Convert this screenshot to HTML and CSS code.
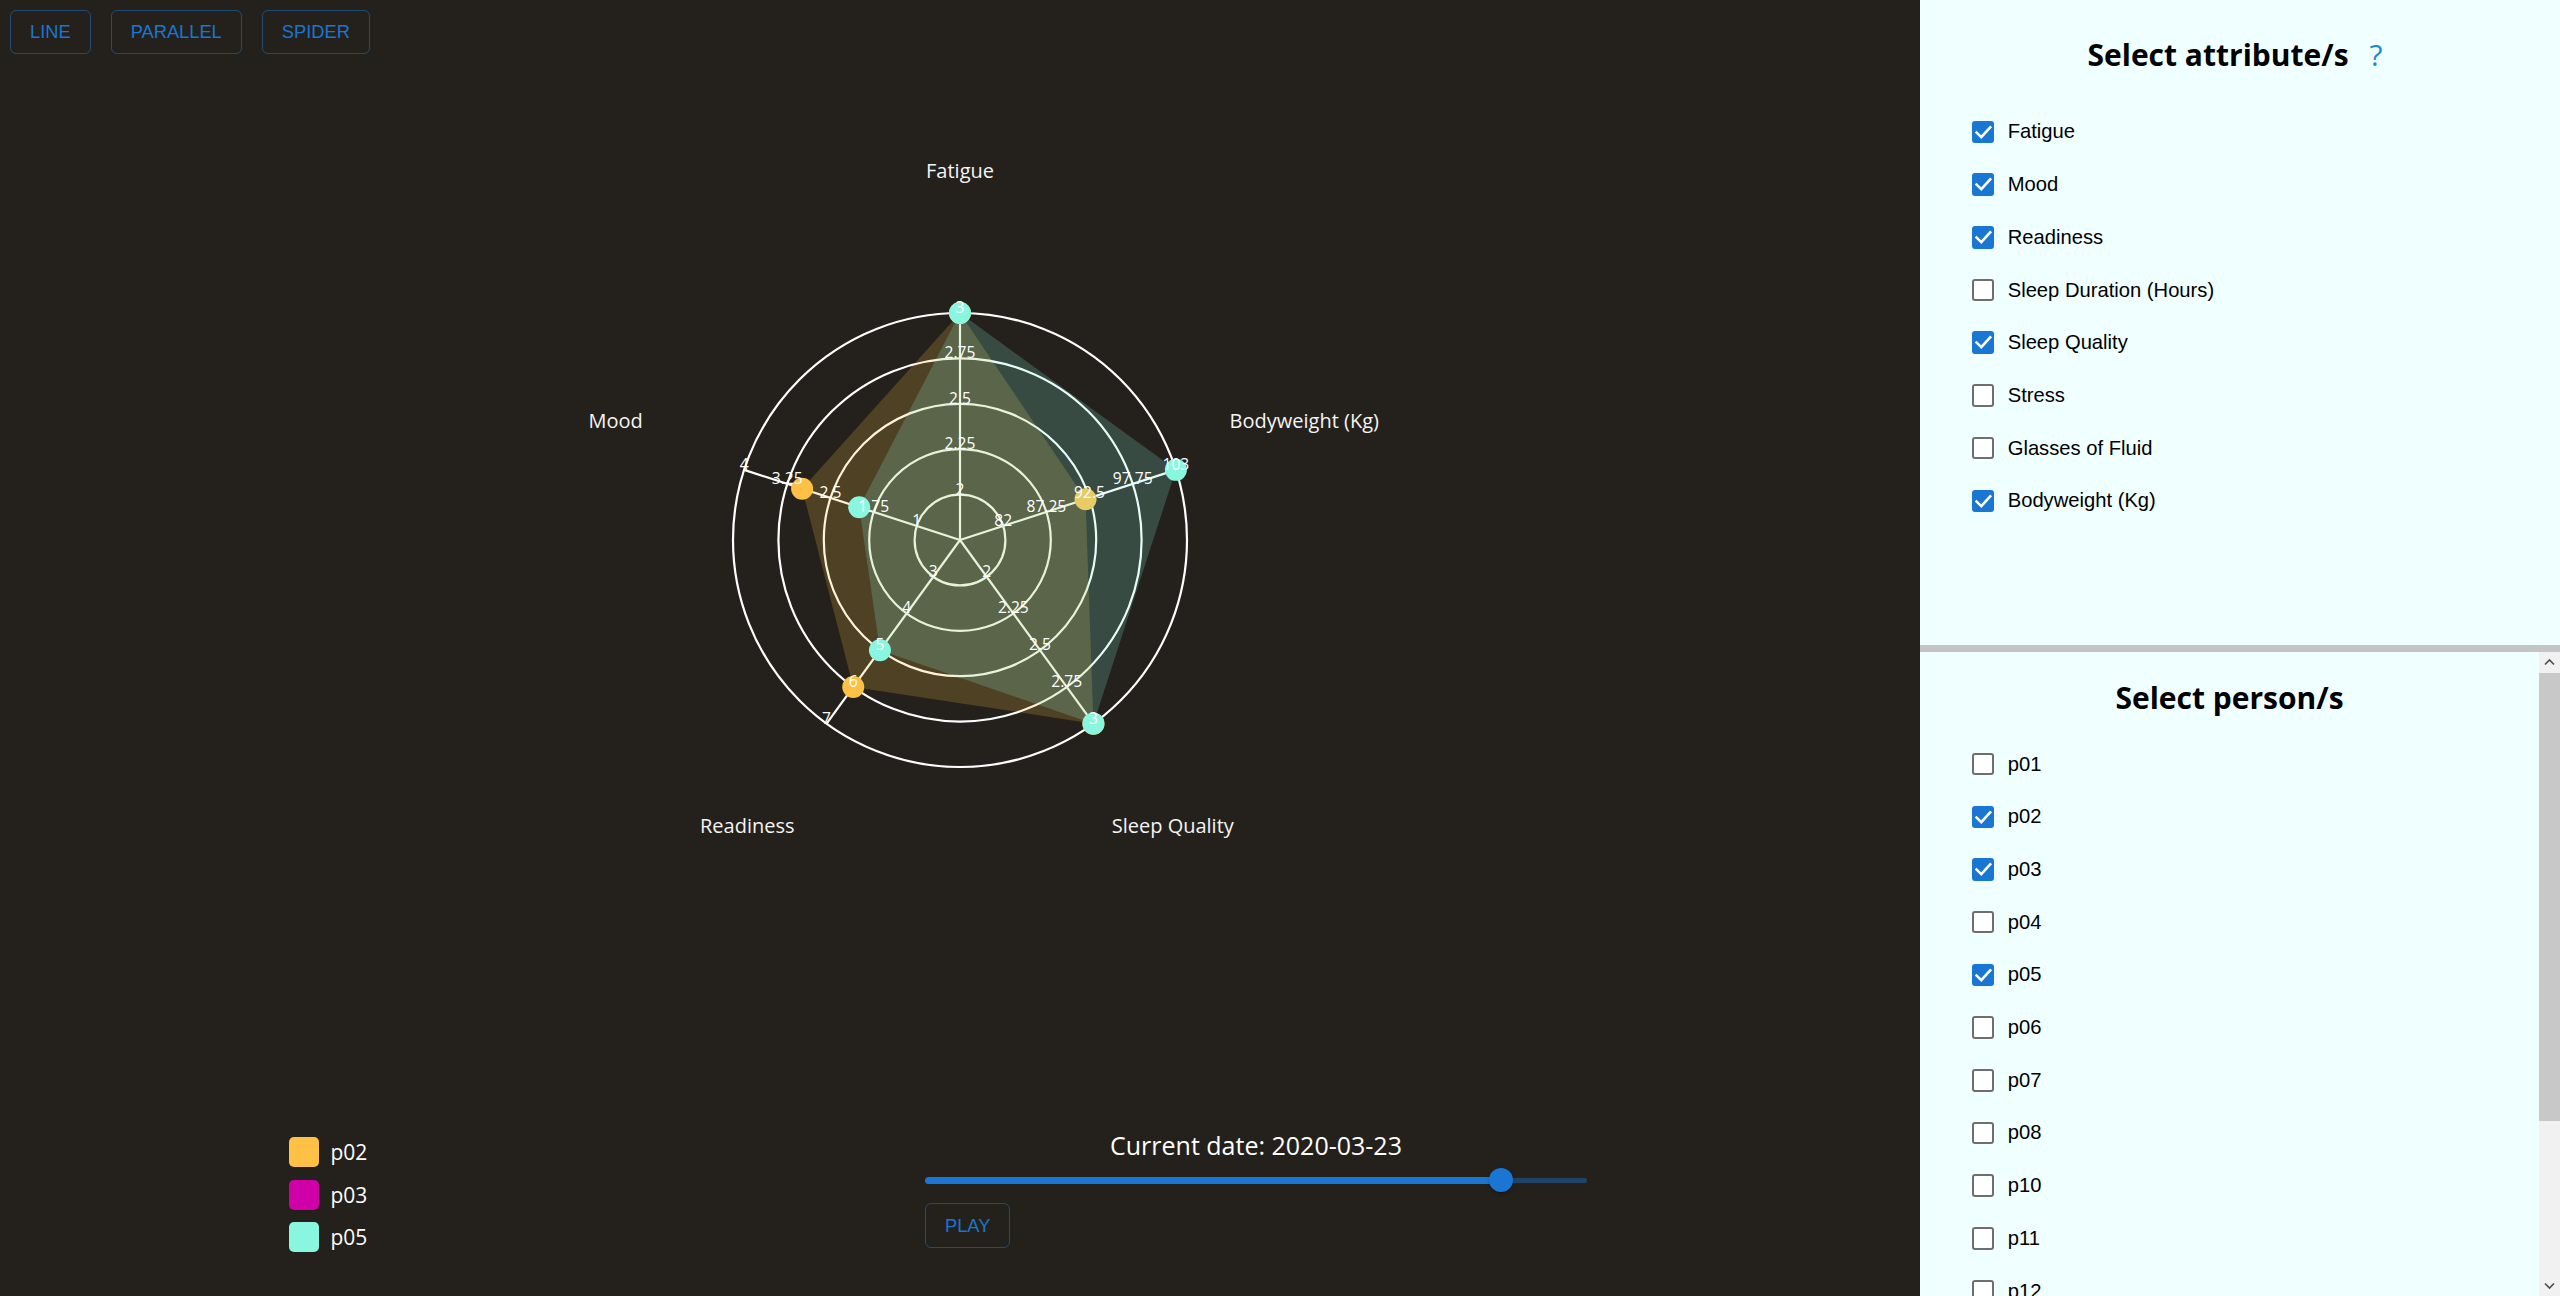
FILE: index.html
```html
<!DOCTYPE html>
<html>
<head>
<meta charset="utf-8">
<title>Spider chart</title>
<link rel="stylesheet" href="styles.css">
</head>
<body>
<div class="app">
  <main class="main">
    <nav class="toolbar">
      <button class="btn">LINE</button>
      <button class="btn">PARALLEL</button>
      <button class="btn">SPIDER</button>
    </nav>
    <svg class="chart" width="1920" height="1040" viewBox="0 64 1920 1040">
      <g class="rings">
        <circle cx="960" cy="540" r="45.4"/>
        <circle cx="960" cy="540" r="90.8"/>
        <circle cx="960" cy="540" r="136.2"/>
        <circle cx="960" cy="540" r="181.6"/>
        <circle cx="960" cy="540" r="227"/>
      </g>
      <g class="axes">
        <line x1="960" y1="540" x2="960" y2="313"/>
        <line x1="960" y1="540" x2="1175.89" y2="469.85"/>
        <line x1="960" y1="540" x2="1093.43" y2="723.65"/>
        <line x1="960" y1="540" x2="826.57" y2="723.65"/>
        <line x1="960" y1="540" x2="744.11" y2="469.85"/>
      </g>
      <g class="series p02">
        <polygon class="area" points="960,313 1085.54,499.21 1093.43,723.65 853.26,686.92 802.12,488.70"/>
        <circle class="dot" cx="960" cy="313" r="11"/>
        <circle class="dot" cx="1085.54" cy="499.21" r="11"/>
        <circle class="dot" cx="1093.43" cy="723.65" r="11"/>
        <circle class="dot" cx="853.26" cy="686.92" r="11"/>
        <circle class="dot" cx="802.12" cy="488.70" r="11"/>
      </g>
      <g class="series p05">
        <polygon class="area" points="960,313 1175.89,469.85 1093.43,723.65 879.94,650.19 859.19,507.24"/>
        <circle class="dot" cx="960" cy="313" r="11"/>
        <circle class="dot" cx="1175.89" cy="469.85" r="11"/>
        <circle class="dot" cx="1093.43" cy="723.65" r="11"/>
        <circle class="dot" cx="879.94" cy="650.19" r="11"/>
        <circle class="dot" cx="859.19" cy="507.24" r="11"/>
      </g>
      <g class="ticks">
        <text x="960" y="494.6">2</text>
        <text x="960" y="449.2">2.25</text>
        <text x="960" y="403.8">2.5</text>
        <text x="960" y="358.4">2.75</text>
        <text x="960" y="313">3</text>
        <text x="1003.18" y="525.97">82</text>
        <text x="1046.36" y="511.94">87.25</text>
        <text x="1089.53" y="497.91">92.5</text>
        <text x="1132.71" y="483.88">97.75</text>
        <text x="1175.89" y="469.85">103</text>
        <text x="986.69" y="576.73">2</text>
        <text x="1013.37" y="613.46">2.25</text>
        <text x="1040.06" y="650.19">2.5</text>
        <text x="1066.74" y="686.92">2.75</text>
        <text x="1093.43" y="723.65">3</text>
        <text x="933.31" y="576.73">3</text>
        <text x="906.63" y="613.46">4</text>
        <text x="879.94" y="650.19">5</text>
        <text x="853.26" y="686.92">6</text>
        <text x="826.57" y="723.65">7</text>
        <text x="916.82" y="525.97">1</text>
        <text x="873.64" y="511.94">1.75</text>
        <text x="830.47" y="497.91">2.5</text>
        <text x="787.29" y="483.88">3.25</text>
        <text x="744.11" y="469.85">4</text>
      </g>
      <g class="names">
        <text x="960" y="178">Fatigue</text>
        <text x="1304.28" y="428.13">Bodyweight (Kg)</text>
        <text x="1172.78" y="832.87">Sleep Quality</text>
        <text x="747.22" y="832.87">Readiness</text>
        <text x="615.72" y="428.13">Mood</text>
      </g>
    </svg>
    <div class="footer">
      <ul class="legend">
        <li class="legend-item"><span class="swatch c-p02"></span><span>p02</span></li>
        <li class="legend-item"><span class="swatch c-p03"></span><span>p03</span></li>
        <li class="legend-item"><span class="swatch c-p05"></span><span>p05</span></li>
      </ul>
      <div class="controls">
        <div class="date">Current date: 2020-03-23</div>
        <div class="slider">
          <div class="rail"></div>
          <div class="track" style="width: 86.96%"></div>
          <div class="thumb" style="left: 86.96%"></div>
        </div>
        <button class="btn play">PLAY</button>
      </div>
    </div>
  </main>
  <aside class="side">
    <section class="attr">
      <div class="title-row">
        <h2 class="title">Select attribute/s</h2>
        <span class="help">?</span>
      </div>
      <ul class="checklist attr-list">
        <li class="check"><span class="box on"><svg viewBox="0 0 22.5 22.5"><polyline points="4.6,11.6 9.3,16.2 18.2,6.4"/></svg></span><span>Fatigue</span></li>
        <li class="check"><span class="box on"><svg viewBox="0 0 22.5 22.5"><polyline points="4.6,11.6 9.3,16.2 18.2,6.4"/></svg></span><span>Mood</span></li>
        <li class="check"><span class="box on"><svg viewBox="0 0 22.5 22.5"><polyline points="4.6,11.6 9.3,16.2 18.2,6.4"/></svg></span><span>Readiness</span></li>
        <li class="check"><span class="box"></span><span>Sleep Duration (Hours)</span></li>
        <li class="check"><span class="box on"><svg viewBox="0 0 22.5 22.5"><polyline points="4.6,11.6 9.3,16.2 18.2,6.4"/></svg></span><span>Sleep Quality</span></li>
        <li class="check"><span class="box"></span><span>Stress</span></li>
        <li class="check"><span class="box"></span><span>Glasses of Fluid</span></li>
        <li class="check"><span class="box on"><svg viewBox="0 0 22.5 22.5"><polyline points="4.6,11.6 9.3,16.2 18.2,6.4"/></svg></span><span>Bodyweight (Kg)</span></li>
      </ul>
    </section>
    <section class="persons">
      <div class="plist">
        <h2 class="title">Select person/s</h2>
        <ul class="checklist person-list">
          <li class="check"><span class="box"></span><span>p01</span></li>
          <li class="check"><span class="box on"><svg viewBox="0 0 22.5 22.5"><polyline points="4.6,11.6 9.3,16.2 18.2,6.4"/></svg></span><span>p02</span></li>
          <li class="check"><span class="box on"><svg viewBox="0 0 22.5 22.5"><polyline points="4.6,11.6 9.3,16.2 18.2,6.4"/></svg></span><span>p03</span></li>
          <li class="check"><span class="box"></span><span>p04</span></li>
          <li class="check"><span class="box on"><svg viewBox="0 0 22.5 22.5"><polyline points="4.6,11.6 9.3,16.2 18.2,6.4"/></svg></span><span>p05</span></li>
          <li class="check"><span class="box"></span><span>p06</span></li>
          <li class="check"><span class="box"></span><span>p07</span></li>
          <li class="check"><span class="box"></span><span>p08</span></li>
          <li class="check"><span class="box"></span><span>p10</span></li>
          <li class="check"><span class="box"></span><span>p11</span></li>
          <li class="check"><span class="box"></span><span>p12</span></li>
          <li class="check"><span class="box"></span><span>p13</span></li>
          <li class="check"><span class="box"></span><span>p14</span></li>
        </ul>
      </div>
      <div class="scrollbar">
        <div class="sb-btn"><svg viewBox="0 0 21 21"><polyline points="6,12.5 10.5,8 15,12.5"/></svg></div>
        <div class="sb-thumb"></div>
        <div class="sb-track"></div>
        <div class="sb-btn"><svg viewBox="0 0 21 21"><polyline points="6,8.5 10.5,13 15,8.5"/></svg></div>
      </div>
    </section>
  </aside>
</div>
</body>
</html>
```

FILE: styles.css
```css
* { box-sizing: border-box; }
html, body { margin: 0; padding: 0; }
body { width: 2560px; height: 1296px; overflow: hidden; font-family: "Liberation Sans", Arial, sans-serif; }

.app { display: flex; width: 2560px; height: 1296px; }

.main {
  width: 1920px;
  height: 1296px;
  background: #24211c;
  display: flex;
  flex-direction: column;
}

.toolbar { display: flex; gap: 20px; padding: 10px; height: 64px; }

.btn {
  height: 44px;
  padding: 0 19px;
  border: 1px solid rgba(25, 118, 210, 0.5);
  border-radius: 6px;
  background: transparent;
  color: #1976d2;
  font-family: "Liberation Sans", Arial, sans-serif;
  font-size: 18.3px;
  display: inline-flex;
  align-items: center;
  justify-content: center;
  margin: 0;
}

.chart { display: block; flex: none; }
.rings circle { fill: none; stroke: #ffffff; stroke-width: 2.2; }
.axes line { stroke: #ffffff; stroke-width: 2.2; }
.series .area { stroke: none; fill-opacity: 0.2; }
.p02 .area, .p02 .dot { fill: #ffc145; }
.p05 .area, .p05 .dot { fill: #89f7df; }
.ticks text { font-family: "Open Sans", sans-serif; font-size: 15.6px; fill: #ffffff; text-anchor: middle; }
.names text { font-family: "Open Sans", sans-serif; font-size: 20px; fill: #f4f4f4; text-anchor: middle; }

.footer { display: flex; align-items: flex-start; padding-left: 289px; }

.legend {
  list-style: none;
  margin: 33.3px 0 0 0;
  padding: 0;
  width: 636px;
  flex: none;
  display: flex;
  flex-direction: column;
  gap: 12.3px;
}
.legend-item {
  display: flex;
  align-items: center;
  gap: 11.5px;
  height: 30px;
  font-family: "Open Sans", sans-serif;
  font-size: 21px;
  color: #ffffff;
}
.swatch { width: 30px; height: 30px; border-radius: 5px; flex: none; }
.c-p02 { background: #ffc145; }
.c-p03 { background: #d000a8; }
.c-p05 { background: #89f7df; }

.controls { width: 662px; flex: none; margin-top: 23.6px; display: flex; flex-direction: column; align-items: flex-start; }
.date {
  width: 100%;
  text-align: center;
  font-family: "Open Sans", sans-serif;
  font-size: 25px;
  line-height: 34px;
  color: #ffffff;
}
.slider { position: relative; width: 100%; height: 24px; margin-top: 6.7px; }
.rail {
  position: absolute; left: 0; right: 0; top: 9.5px; height: 5px;
  border-radius: 3px;
  background: rgba(25, 118, 210, 0.42);
}
.track {
  position: absolute; left: 0; top: 8.5px; height: 7px;
  border-radius: 4px;
  background: #1976d2;
}
.thumb {
  position: absolute; top: 0; width: 24px; height: 24px; margin-left: -12px;
  border-radius: 50%;
  background: #1976d2;
  box-shadow: 0 3px 1px -2px rgba(0,0,0,.2), 0 2px 2px 0 rgba(0,0,0,.14), 0 1px 5px 0 rgba(0,0,0,.12);
}
.play { margin-top: 11px; height: 45px; }

.side {
  width: 640px;
  height: 1296px;
  display: flex;
  flex-direction: column;
  background: #f0ffff;
}
.attr {
  height: 652px;
  flex: none;
  border-bottom: 7px solid #c4c4c4;
  padding: 35px 0 0 51.7px;
}
.title-row {
  display: flex;
  justify-content: center;
  align-items: baseline;
  gap: 21px;
  padding-right: 61.7px;
}
.title {
  margin: 0;
  font-family: "Open Sans", sans-serif;
  font-weight: 700;
  font-size: 30px;
  line-height: 40px;
  color: #000;
  text-align: center;
}
.help {
  font-family: "Open Sans", sans-serif;
  font-size: 30px;
  line-height: 40px;
  color: #1a8ad4;
}
.checklist { list-style: none; margin: 0; padding: 0; }
.attr-list { margin-top: 30.65px; }
.check {
  height: 52.7px;
  display: flex;
  align-items: center;
  gap: 13.5px;
  font-family: "Liberation Sans", Arial, sans-serif;
  font-size: 20.2px;
  color: #000;
}
.box {
  width: 22.5px;
  height: 22.5px;
  flex: none;
  border-radius: 3px;
  border: 2px solid #6e6e6e;
  background: #ffffff;
  display: flex;
}
.box.on { border: none; background: #1976d2; }
.box svg { width: 22.5px; height: 22.5px; }
.box polyline { fill: none; stroke: #ffffff; stroke-width: 2.6; stroke-linecap: square; stroke-linejoin: miter; }

.persons { flex: 1; display: flex; min-height: 0; }
.plist { flex: 1; overflow: hidden; padding: 25.7px 0 0 51.7px; }
.plist .title { padding-right: 51.7px; }
.person-list { margin-top: 20.1px; }

.scrollbar { width: 21px; flex: none; display: flex; flex-direction: column; background: #f1f1f1; }
.sb-btn { height: 21px; flex: none; background: #f1f1f1; }
.sb-btn svg { width: 21px; height: 21px; display: block; }
.sb-btn polyline { fill: none; stroke: #505050; stroke-width: 1.7; }
.sb-thumb { height: 448px; flex: none; background: #c8c8c8; }
.sb-track { flex: 1; background: #f1f1f1; }
```
